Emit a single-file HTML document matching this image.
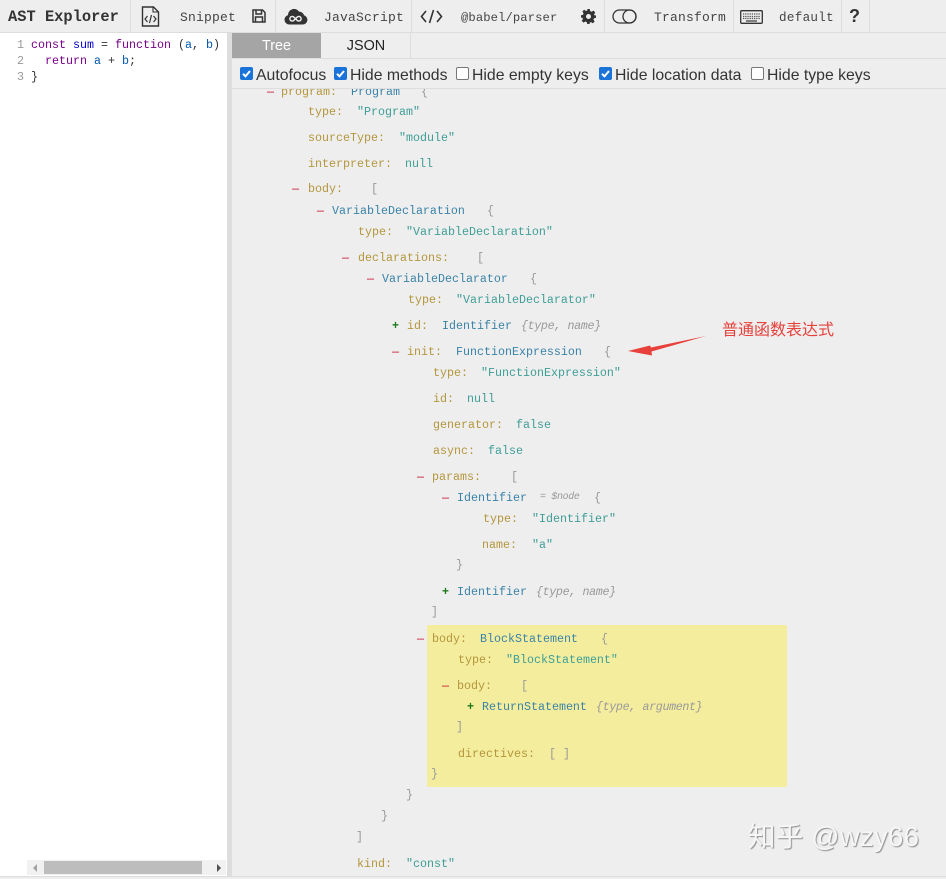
<!DOCTYPE html>
<html lang="zh">
<head>
<meta charset="utf-8">
<title>AST Explorer</title>
<style>
html,body{margin:0;padding:0;width:946px;height:879px;overflow:hidden;background:#eee}
body{position:relative;font-family:"Liberation Mono","Noto Sans CJK SC",monospace;font-size:11.67px}
.a{position:absolute;white-space:pre;line-height:14px;height:14px}
.b{position:absolute}
.k{color:#b4963c}.t{color:#3a83a8}.s{color:#3f9e96}.n{color:#3f9e96}
.g{color:#999}.i{color:#999;font-style:italic;letter-spacing:-.35px}
.m{color:#c8102e}.p{color:#1b7a1b;font-weight:bold}
.tb{color:#444;font-size:13px}
.o{font-family:"Liberation Sans",sans-serif;font-size:15.8px;color:#333;line-height:18px;height:18px}
.c{position:absolute;top:67px;width:13px;height:13px;border-radius:2px;box-sizing:border-box}
.on{background:#1a73d9}
.off{background:#fff;border:1px solid #777}
.sep{position:absolute;top:0;width:1px;height:32px;background:#ddd}
</style>
</head>
<body>
<!-- panels -->
<div class="b" style="left:0;top:33px;width:227px;height:843px;background:#fff"></div>
<div class="b" style="left:227px;top:33px;width:5px;height:843px;background:#ddd"></div>
<div class="b" style="left:0;top:32px;width:946px;height:1px;background:#ddd"></div>
<div class="b" style="left:0;top:876px;width:946px;height:1px;background:#ddd"></div>
<div class="b" style="left:232px;top:58px;width:714px;height:1px;background:#ddd"></div>
<div class="b" style="left:232px;top:88px;width:714px;height:1px;background:#ddd"></div>

<!-- toolbar -->
<div class="a" style="left:8px;top:10px;font-weight:bold;font-size:15.4px;color:#333">AST Explorer</div>
<div class="sep" style="left:130px"></div>
<div class="sep" style="left:275px"></div>
<div class="sep" style="left:411px"></div>
<div class="sep" style="left:604px"></div>
<div class="sep" style="left:733px"></div>
<div class="sep" style="left:841px"></div>
<div class="sep" style="left:869px"></div>
<svg class="b" style="left:141px;top:6px" width="19" height="21" viewBox="0 0 19 21" fill="none" stroke="#333">
<path d="M1.500 1h11l5 5v14h-16z" stroke-width="1.400"/><path d="M12 1v5h5" stroke-width="1.100"/>
<path d="M6.500 10l-2.500 3 2.500 3M12.500 10l2.500 3-2.500 3M10.500 9l-2 8" stroke-width="1.200"/></svg>
<div class="a tb" style="left:180px;top:11px;letter-spacing:.2px">Snippet</div>
<svg class="b" style="left:252px;top:9px" width="14" height="14" viewBox="0 0 14 14" fill="none" stroke="#333" stroke-width="1.500">
<path d="M1 1h9.500l2.500 2.500v9.500h-12z"/><path d="M4 1v4h5.500v-4M3.500 13v-5h7v5"/></svg>
<svg class="b" style="left:284px;top:8px" width="24" height="17" viewBox="0 0 24 17">
<path d="M5 16.500a4.800 4.800 0 0 1-1-9.400 6 6 0 0 1 11-3.500 5 5 0 0 1 5 3.700 4.700 4.700 0 0 1-1 9.200z" fill="#333"/>
<path d="M9.700 9a2.300 2.300 0 1 0 0 3.500l3.600-3.500a2.300 2.300 0 1 1 0 3.500z" fill="none" stroke="#eee" stroke-width="1.500"/></svg>
<div class="a tb" style="left:324px;top:11px;letter-spacing:.2px">JavaScript</div>
<svg class="b" style="left:420px;top:9px" width="23" height="15" viewBox="0 0 23 15" fill="none" stroke="#333" stroke-width="1.600">
<path d="M6 2L1.500 7.500 6 13M17 2l4.500 5.500L17 13M13.500 1l-4 13"/></svg>
<div class="a tb" style="left:461px;top:11px;font-size:12.200px;letter-spacing:.1px">@babel/parser</div>
<svg class="b" style="left:581px;top:9px" width="15" height="15" viewBox="0 0 24 24">
<path d="M10 0h4l.7 3.400 2.300 1 3-1.900 2.800 2.800-1.900 3 1 2.300L24 10v4l-3.100.7-1 2.300 1.900 3-2.800 2.800-3-1.900-2.300 1L14 24h-4l-.7-3.100-2.300-1-3 1.900-2.800-2.800 1.900-3-1-2.300L0 14v-4l3.100-.7 1-2.300-1.900-3 2.800-2.800 3 1.900 2.300-1z" fill="#333"/>
<circle cx="12" cy="12" r="4" fill="#eee"/></svg>
<svg class="b" style="left:612px;top:9px" width="26" height="15" viewBox="0 0 26 15" fill="none" stroke="#333" stroke-width="1.300">
<rect x="1" y="1" width="23" height="13" rx="6.500"/><circle cx="17.500" cy="7.500" r="6.500"/></svg>
<div class="a tb" style="left:654px;top:11px;letter-spacing:.2px">Transform</div>
<svg class="b" style="left:740px;top:10px" width="23" height="14" viewBox="0 0 23 14" fill="none" stroke="#333">
<rect x=".7" y=".7" width="21.600" height="12.600" rx="1" stroke-width="1.300"/>
<path d="M3 4h17M3 6.500h17M3 8.500h17" stroke-width="1.200" stroke-dasharray="1.300 .9" stroke="#555"/><path d="M6 11h11" stroke-width="1.200"/></svg>
<div class="a tb" style="left:779px;top:11px;font-size:12.600px;letter-spacing:.3px">default</div>
<div class="a" style="left:849px;top:7px;font:bold 18px/18px 'Liberation Sans',sans-serif;height:18px;color:#333">?</div>

<!-- tabs -->
<div class="b" style="left:232px;top:33px;width:89px;height:25px;background:#a5a5a5;color:#fff;font:14.400px/27px 'Liberation Sans',sans-serif;text-align:center">Tree</div>
<div class="b" style="left:322px;top:33px;width:88px;height:25px;color:#222;font:14.400px/27px 'Liberation Sans',sans-serif;text-align:center">JSON</div>
<div class="b" style="left:410px;top:33px;width:1px;height:25px;background:#ddd"></div>

<!-- options -->
<svg class="c on" style="left:240px" viewBox="0 0 13 13"><path d="M3 6.800l2.500 2.500L10 4" fill="none" stroke="#fff" stroke-width="2"/></svg>
<div class="a o" style="left:256px;top:67px">Autofocus</div>
<svg class="c on" style="left:334px" viewBox="0 0 13 13"><path d="M3 6.800l2.500 2.500L10 4" fill="none" stroke="#fff" stroke-width="2"/></svg>
<div class="a o" style="left:350px;top:67px">Hide methods</div>
<div class="c off" style="left:456px"></div>
<div class="a o" style="left:472px;top:67px">Hide empty keys</div>
<svg class="c on" style="left:599px" viewBox="0 0 13 13"><path d="M3 6.800l2.500 2.500L10 4" fill="none" stroke="#fff" stroke-width="2"/></svg>
<div class="a o" style="left:615px;top:67px">Hide location data</div>
<div class="c off" style="left:751px"></div>
<div class="a o" style="left:767px;top:67px">Hide type keys</div>

<!-- editor -->
<div class="a" style="left:17px;top:38px;color:#999">1</div>
<div class="a" style="left:17px;top:54px;color:#999">2</div>
<div class="a" style="left:17px;top:70px;color:#999">3</div>
<div class="a" style="left:31px;top:38px;color:#333"><span style="color:#708">const</span> <span style="color:#00c">sum</span> = <span style="color:#708">function</span> (<span style="color:#05a">a</span>, <span style="color:#05a">b</span>)</div>
<div class="a" style="left:31px;top:54px;color:#333">  <span style="color:#708">return</span> <span style="color:#05a">a</span> + <span style="color:#05a">b</span>;</div>
<div class="a" style="left:31px;top:70px;color:#333">}</div>

<!-- editor scrollbar -->
<div class="b" style="left:27px;top:860px;width:199px;height:15px;background:#f1f1f1"></div>
<div class="b" style="left:44px;top:861px;width:158px;height:13px;background:#bdbdbd"></div>
<div class="b" style="left:33px;top:864px;width:0;height:0;border:4px solid transparent;border-left:0;border-right:4px solid #a3a3a3"></div>
<div class="b" style="left:217px;top:864px;width:0;height:0;border:4px solid transparent;border-right:0;border-left:4px solid #505050"></div>

<!-- tree viewport -->
<div class="b" style="left:232px;top:89px;width:714px;height:787px;overflow:hidden">
<div class="b" style="left:-232px;top:-89px;width:946px;height:879px">
<div class="b" style="left:427px;top:625px;width:360px;height:162px;background:#f4ed9e;border-radius:2px"></div>

<div class="a m" style="top:85px;left:267px">—</div><div class="a k" style="top:85px;left:281px">program:</div><div class="a t" style="top:85px;left:351px">Program</div><div class="a g" style="top:85px;left:421px">{</div>
<div class="a k" style="top:105px;left:308px">type:</div><div class="a s" style="top:105px;left:357px">"Program"</div>
<div class="a k" style="top:131px;left:308px">sourceType:</div><div class="a s" style="top:131px;left:399px">"module"</div>
<div class="a k" style="top:157px;left:308px">interpreter:</div><div class="a n" style="top:157px;left:405px">null</div>
<div class="a m" style="top:182px;left:292px">—</div><div class="a k" style="top:182px;left:308px">body:</div><div class="a g" style="top:182px;left:371px">[</div>
<div class="a m" style="top:204px;left:317px">—</div><div class="a t" style="top:204px;left:332px">VariableDeclaration</div><div class="a g" style="top:204px;left:487px">{</div>
<div class="a k" style="top:225px;left:358px">type:</div><div class="a s" style="top:225px;left:406px">"VariableDeclaration"</div>
<div class="a m" style="top:251px;left:342px">—</div><div class="a k" style="top:251px;left:358px">declarations:</div><div class="a g" style="top:251px;left:477px">[</div>
<div class="a m" style="top:272px;left:367px">—</div><div class="a t" style="top:272px;left:382px">VariableDeclarator</div><div class="a g" style="top:272px;left:530px">{</div>
<div class="a k" style="top:293px;left:408px">type:</div><div class="a s" style="top:293px;left:456px">"VariableDeclarator"</div>
<div class="a p" style="top:319px;left:392px">+</div><div class="a k" style="top:319px;left:407px">id:</div><div class="a t" style="top:319px;left:442px">Identifier</div><div class="a i" style="top:319px;left:521px">{type, name}</div>
<div class="a m" style="top:345px;left:392px">—</div><div class="a k" style="top:345px;left:407px">init:</div><div class="a t" style="top:345px;left:456px">FunctionExpression</div><div class="a g" style="top:345px;left:604px">{</div>
<div class="a k" style="top:366px;left:433px">type:</div><div class="a s" style="top:366px;left:481px">"FunctionExpression"</div>
<div class="a k" style="top:392px;left:433px">id:</div><div class="a n" style="top:392px;left:467px">null</div>
<div class="a k" style="top:418px;left:433px">generator:</div><div class="a n" style="top:418px;left:516px">false</div>
<div class="a k" style="top:444px;left:433px">async:</div><div class="a n" style="top:444px;left:488px">false</div>
<div class="a m" style="top:470px;left:417px">—</div><div class="a k" style="top:470px;left:432px">params:</div><div class="a g" style="top:470px;left:511px">[</div>
<div class="a m" style="top:491px;left:442px">—</div><div class="a t" style="top:491px;left:457px">Identifier</div><div class="a i" style="top:491px;left:540px;font-size:10px">= $node</div><div class="a g" style="top:491px;left:594px">{</div>
<div class="a k" style="top:512px;left:483px">type:</div><div class="a s" style="top:512px;left:532px">"Identifier"</div>
<div class="a k" style="top:538px;left:482px">name:</div><div class="a s" style="top:538px;left:532px">"a"</div>
<div class="a g" style="top:558px;left:456px">}</div>
<div class="a p" style="top:585px;left:442px">+</div><div class="a t" style="top:585px;left:457px">Identifier</div><div class="a i" style="top:585px;left:536px">{type, name}</div>
<div class="a g" style="top:605px;left:431px">]</div>
<div class="a m" style="top:632px;left:417px">—</div><div class="a k" style="top:632px;left:432px">body:</div><div class="a t" style="top:632px;left:480px">BlockStatement</div><div class="a g" style="top:632px;left:601px">{</div>
<div class="a k" style="top:653px;left:458px">type:</div><div class="a s" style="top:653px;left:506px">"BlockStatement"</div>
<div class="a m" style="top:679px;left:442px">—</div><div class="a k" style="top:679px;left:457px">body:</div><div class="a g" style="top:679px;left:521px">[</div>
<div class="a p" style="top:700px;left:467px">+</div><div class="a t" style="top:700px;left:482px">ReturnStatement</div><div class="a i" style="top:700px;left:596px">{type, argument}</div>
<div class="a g" style="top:720px;left:456px">]</div>
<div class="a k" style="top:747px;left:458px">directives:</div><div class="a g" style="top:747px;left:549px">[ ]</div>
<div class="a g" style="top:767px;left:431px">}</div>
<div class="a g" style="top:788px;left:406px">}</div>
<div class="a g" style="top:809px;left:381px">}</div>
<div class="a g" style="top:830px;left:356px">]</div>
<div class="a k" style="top:857px;left:357px">kind:</div><div class="a s" style="top:857px;left:406px">"const"</div>
</div>
</div>

<!-- annotation -->
<svg class="b" style="left:620px;top:330px" width="95" height="30" viewBox="0 0 95 30">
<path d="M86 6L31 17.500 30 15.500 8 21 32 25.500 31.500 21.500z" fill="#e8403a"/></svg>
<div class="a" style="left:722px;top:321px;height:20px;font:16px/20px 'Liberation Sans','Noto Sans CJK SC',sans-serif;color:#e6423c">普通函数表达式</div>

<!-- watermark -->
<div class="a" style="left:748px;top:819px;height:36px;font:27.500px/36px 'Liberation Sans','Noto Sans CJK SC',sans-serif;color:#f6f6f6;text-shadow:1px 1px 1px #8f8f8f;letter-spacing:.3px">知乎 @wzy66</div>
</body>
</html>
